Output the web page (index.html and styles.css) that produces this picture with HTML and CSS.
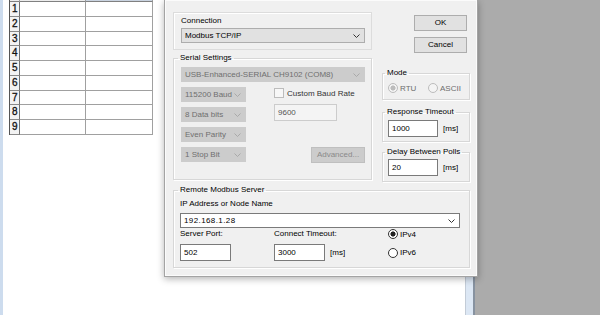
FILE: index.html
```html
<!DOCTYPE html>
<html lang="en">
<head>
  <meta charset="UTF-8" />
  <title>Modbus Poll - Connection Setup</title>
  <link rel="stylesheet" href="styles.css">
</head>
<body>
  <div class="desktop">
    <div class="app">
      <div class="sheet">
        <div class="hd"></div><div class="hd"></div><div class="hd sel"></div>
        <div class="rh">1</div><div class="cell"></div><div class="cell"></div>
        <div class="rh">2</div><div class="cell"></div><div class="cell"></div>
        <div class="rh">3</div><div class="cell"></div><div class="cell"></div>
        <div class="rh">4</div><div class="cell"></div><div class="cell"></div>
        <div class="rh">5</div><div class="cell"></div><div class="cell"></div>
        <div class="rh">6</div><div class="cell"></div><div class="cell"></div>
        <div class="rh">7</div><div class="cell"></div><div class="cell"></div>
        <div class="rh">8</div><div class="cell"></div><div class="cell"></div>
        <div class="rh">9</div><div class="cell"></div><div class="cell"></div>
      </div>
    </div>
    <div class="edge"></div>
    <div class="backdrop"></div>

    <div class="dialog">
      <div class="dlg-top">
        <div class="main-col">
          <div class="conn">
            <div class="lbl">Connection</div>
            <div class="combo">
              <span>Modbus TCP/IP</span>
              <svg viewBox="0 0 7 4"><polyline points="0.5,0.5 3.5,3.5 6.5,0.5" /></svg>
            </div>
          </div>

          <fieldset class="group serial">
            <legend>Serial Settings</legend>
            <div class="combo off">
              <span>USB-Enhanced-SERIAL CH9102 (COM8)</span>
              <svg viewBox="0 0 7 4"><polyline points="0.5,0.5 3.5,3.5 6.5,0.5" /></svg>
            </div>
            <div class="serial-grid">
              <div class="combo off"><span>115200 Baud</span><svg viewBox="0 0 7 4"><polyline points="0.5,0.5 3.5,3.5 6.5,0.5" /></svg></div>
              <div class="check-row"><span class="check"></span><span>Custom Baud Rate</span></div>
              <div class="combo off"><span>8 Data bits</span><svg viewBox="0 0 7 4"><polyline points="0.5,0.5 3.5,3.5 6.5,0.5" /></svg></div>
              <div class="tb off baud">9600</div>
              <div class="combo off"><span>Even Parity</span><svg viewBox="0 0 7 4"><polyline points="0.5,0.5 3.5,3.5 6.5,0.5" /></svg></div>
              <div></div>
              <div class="combo off"><span>1 Stop Bit</span><svg viewBox="0 0 7 4"><polyline points="0.5,0.5 3.5,3.5 6.5,0.5" /></svg></div>
              <div class="btn off adv">Advanced...</div>
            </div>
          </fieldset>
        </div>

        <div class="side-col">
          <div class="btn ok">OK</div>
          <div class="btn cancel">Cancel</div>

          <fieldset class="group side mode">
            <legend>Mode</legend>
            <div class="radios">
              <label class="opt off rtu"><span class="radio on"></span>RTU</label>
              <label class="opt off"><span class="radio"></span>ASCII</label>
            </div>
          </fieldset>

          <fieldset class="group side resp">
            <legend>Response Timeout</legend>
            <div class="ms-row"><div class="tb short">1000</div><span>[ms]</span></div>
          </fieldset>

          <fieldset class="group side delay">
            <legend>Delay Between Polls</legend>
            <div class="ms-row"><div class="tb short">20</div><span>[ms]</span></div>
          </fieldset>
        </div>
      </div>

      <fieldset class="group remote">
        <legend>Remote Modbus Server</legend>
        <div class="lbl">IP Address or Node Name</div>
        <div class="combo edit">
          <span class="ip">192.168.1.28</span>
          <svg viewBox="0 0 7 4"><polyline points="0.5,0.5 3.5,3.5 6.5,0.5" /></svg>
        </div>
        <div class="remote-grid">
          <div class="lbl">Server Port:</div>
          <div class="lbl">Connect Timeout:</div>
          <label class="opt"><span class="radio on"></span>IPv4</label>
          <div class="tb port">502</div>
          <div class="ms-row"><div class="tb port">3000</div><span>[ms]</span></div>
          <label class="opt"><span class="radio"></span>IPv6</label>
        </div>
      </fieldset>
    </div>
  </div>
</body>
</html>
```

FILE: styles.css
```css
body {
  margin: 0;
  width: 600px;
  height: 315px;
  overflow: hidden;
  font-family: "Liberation Sans", Arial, sans-serif;
  font-size: 8px;
  color: #000;
}

.desktop {
  position: relative;
  display: flex;
  height: 315px;
}

/* spreadsheet window behind the dialog */
.app {
  width: 465px;
  box-sizing: border-box;
  background: #fff;
  border-left: 3px solid #cddcee;
  padding-left: 6px;
}

.sheet {
  display: grid;
  grid-template-columns: 10px 66px 67px;
  grid-template-rows: 2px repeat(9, 14.75px);
  width: 143px;
  border-left: 1px solid #555;
}

.sheet > div {
  box-sizing: border-box;
  border-right: 1px solid #a0a0a0;
  border-bottom: 1px solid #a0a0a0;
}

.sheet .hd {
  background: #ececec;
  border-bottom-color: #808080;
}

.sheet .hd.sel {
  background: #c9d3e0;
}

.sheet .rh {
  background: #f3f3f3;
  border-right-color: #707070;
  border-bottom-color: #8a8a8a;
  font-size: 10px;
  line-height: 14px;
  padding-left: 2px;
  color: #111;
  -webkit-text-stroke: 0.3px #111;
}

.edge {
  width: 7px;
  background: #dce7f4;
  border-left: 1px solid #c3ccd7;
  border-right: 2px solid #8792a0;
}

.backdrop {
  flex: 1;
  background: #ababab;
}

/* connection dialog */
.dialog {
  position: absolute;
  left: 164px;
  top: 0;
  width: 314px;
  box-sizing: border-box;
  padding: 12px 7px 8px 8px;
  background: #f0f0f0;
  border: 1px solid #a3a3a3;
  border-top: none;
  box-shadow: 0 2px 7px rgba(0, 0, 0, 0.3), inset 0 0 0 1px #fbfbfb;
}

.dlg-top {
  display: grid;
  grid-template-columns: 199px 88px;
  column-gap: 10px;
  align-items: start;
}

.lbl {
  line-height: 10px;
  white-space: nowrap;
}

.conn {
  height: 38px;
  box-sizing: border-box;
  padding: 3px 6px 0 7px;
  border: 1px solid #dcdcdc;
  box-shadow: inset 1px 1px 0 #fff;
}

.conn .combo {
  margin-top: 2px;
}

.group {
  margin: 0;
  min-width: 0;
  border: 1px solid #d7d7d7;
  box-shadow: inset 1px 1px 0 #fff, 1px 1px 0 #fff;
}

.group legend {
  padding: 0 2px;
  margin-left: -3px;
  line-height: 10px;
}

.serial {
  margin-top: 3px;
  padding: 4px 6px 17px 7px;
}

.serial-grid {
  display: grid;
  grid-template-columns: 65px 1fr;
  grid-template-rows: repeat(4, 15px);
  row-gap: 5px;
  column-gap: 28px;
  margin-top: 5px;
}

.check-row {
  display: flex;
  align-items: center;
  gap: 3px;
  align-self: start;
  margin-top: 1px;
  color: #333;
}

.check {
  width: 10px;
  height: 10px;
  box-sizing: border-box;
  border: 1px solid #bcbcbc;
  background: #f7f7f7;
}

.baud {
  width: 63px;
  margin-top: -3px;
}

.adv {
  justify-self: end;
  width: 54px;
}

/* combo boxes */
.combo {
  display: flex;
  align-items: center;
  justify-content: space-between;
  height: 15px;
  box-sizing: border-box;
  padding: 0 4px 0 3px;
  border: 1px solid #adadad;
  background: #e1e1e1;
  white-space: nowrap;
}

.combo svg {
  width: 7px;
  height: 4px;
  fill: none;
  stroke: #333;
  stroke-width: 1;
}

.combo.off {
  background: #cccccc;
  border-color: #cccccc;
  color: #6f6f6f;
}

.combo.off svg {
  stroke: #a9a9a9;
}

.combo.edit {
  background: #fff;
  border-color: #7a7a7a;
}

.ip {
  letter-spacing: 0.4px;
}

/* text boxes */
.tb {
  height: 17px;
  box-sizing: border-box;
  border: 1px solid #7a7a7a;
  background: #fff;
  padding-left: 3px;
  line-height: 15px;
}

.tb.off {
  background: #f4f4f4;
  border-color: #cccccc;
  color: #555;
}

.tb.short {
  width: 50px;
}

.tb.port {
  width: 51px;
}

.ms-row {
  display: flex;
  align-items: center;
  gap: 5px;
}

/* buttons */
.btn {
  height: 16px;
  box-sizing: border-box;
  border: 1px solid #adadad;
  background: #e1e1e1;
  text-align: center;
  line-height: 14px;
}

.btn.off {
  background: #cccccc;
  border-color: #bfbfbf;
  color: #8a8a8a;
}

.ok,
.cancel {
  width: 53px;
  margin-left: 32px;
}

.ok {
  margin-top: 3px;
}

.cancel {
  margin-top: 6px;
}

/* right column groups */
.side {
  padding: 0 4px 0 5px;
}

.mode {
  margin-top: 15px;
  padding-top: 5px;
  padding-bottom: 6px;
}

.resp {
  margin-top: 7px;
  padding-top: 3px;
  padding-bottom: 4px;
}

.delay {
  margin-top: 5px;
  padding-top: 2px;
  padding-bottom: 5px;
}

.radios {
  display: flex;
  height: 10px;
}

.opt {
  display: flex;
  align-items: center;
  gap: 2px;
  white-space: nowrap;
}

.opt.off {
  color: #6d6d6d;
}

.rtu {
  width: 40px;
}

.radio {
  width: 10px;
  height: 10px;
  box-sizing: border-box;
  border: 1px solid #333;
  border-radius: 50%;
  background: #fff;
}

.radio.on {
  background: radial-gradient(circle, #222 0 2.3px, #fff 2.8px);
}

.opt.off .radio {
  border-color: #bcbcbc;
  background: #f4f4f4;
}

.opt.off .radio.on {
  background: radial-gradient(circle, #bcbcbc 0 2.3px, #f4f4f4 2.8px);
}

/* remote server group */
.remote {
  margin-top: 3px;
  padding: 4px 9px 6px 6px;
}

.remote legend {
  margin-left: -2px;
}

.remote .combo {
  margin-top: 4px;
}

.remote-grid {
  display: grid;
  grid-template-columns: 94px 114px 1fr;
  grid-template-rows: 10px 17px;
  row-gap: 5px;
  margin-top: 1px;
  align-items: center;
}
```
